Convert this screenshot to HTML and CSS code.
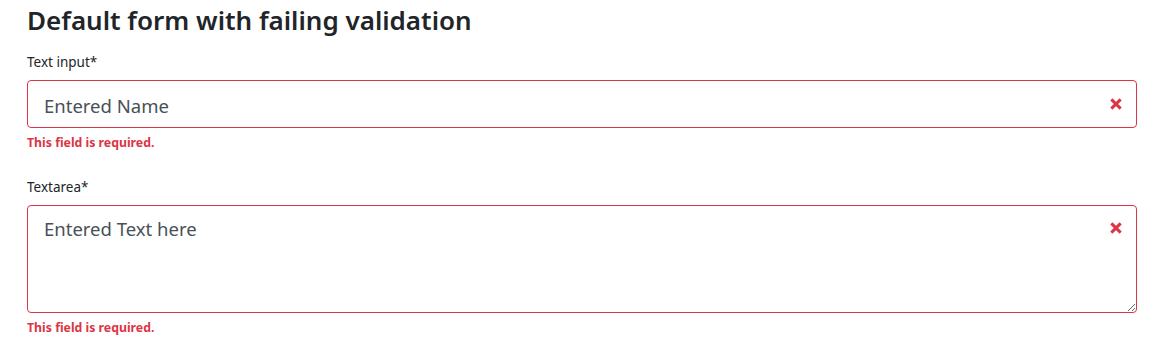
FILE: index.html
```html
<!DOCTYPE html>
<html lang="en">
<head>
  <meta charset="UTF-8" />
  <title>Default form with failing validation</title>
  <link rel="stylesheet" href="styles.css">
</head>
<body>
  <div class="container">
    <h2>Default form with failing validation</h2>

    <div class="form-group">
      <label for="text-input">Text input*</label>
      <div class="field">
        <input type="text" id="text-input" class="form-control is-invalid" value="Entered Name" />
        <svg class="invalid-icon" viewBox="0 0 12 12"><path d="M2 2l8 8M10 2l-8 8" /></svg>
      </div>
      <div class="invalid-feedback">This field is required.</div>
    </div>

    <div class="form-group">
      <label for="textarea">Textarea*</label>
      <div class="field">
        <textarea id="textarea" class="form-control is-invalid">Entered Text here</textarea>
        <svg class="invalid-icon top" viewBox="0 0 12 12"><path d="M2 2l8 8M10 2l-8 8" /></svg>
      </div>
      <div class="invalid-feedback">This field is required.</div>
    </div>
  </div>
</body>
</html>
```

FILE: styles.css
```css
body {
  margin: 0;
  font-family: 'Noto Sans', 'Open Sans', sans-serif;
  color: #212529;
  background-color: #fff;
}
.container {
  width: 1110px;
  margin-left: 27px;
}
h2 {
  font-size: 26px;
  font-weight: 600;
  margin: 2px 0 14px;
  line-height: 36px;
}
.form-group {
  margin-bottom: 26px;
}
label {
  display: block;
  font-size: 13.5px;
  line-height: 20px;
  margin-bottom: 8px;
}
.field {
  position: relative;
}
.form-control {
  display: block;
  width: 100%;
  box-sizing: border-box;
  font-family: inherit;
  font-size: 18.5px;
  color: #495057;
  border: 1px solid #ced4da;
  border-radius: 4px;
  padding: 0 44px 0 16px;
  margin: 0;
  outline: none;
}
input.form-control {
  height: 48px;
  padding-top: 3px;
}
textarea.form-control {
  height: 108px;
  padding-top: 10px;
  line-height: 26px;
  resize: vertical;
}
.form-control.is-invalid {
  border-color: #dc3545;
}
.invalid-icon {
  position: absolute;
  right: 14px;
  top: 17px;
  width: 14px;
  height: 14px;
  stroke: #dc3545;
  stroke-width: 2.6;
  fill: none;
}
.invalid-icon.top {
  top: 16px;
}
.invalid-feedback {
  color: #dc3545;
  font-size: 12.3px;
  font-weight: 700;
  margin-top: 7px;
  line-height: 16px;
}
```
